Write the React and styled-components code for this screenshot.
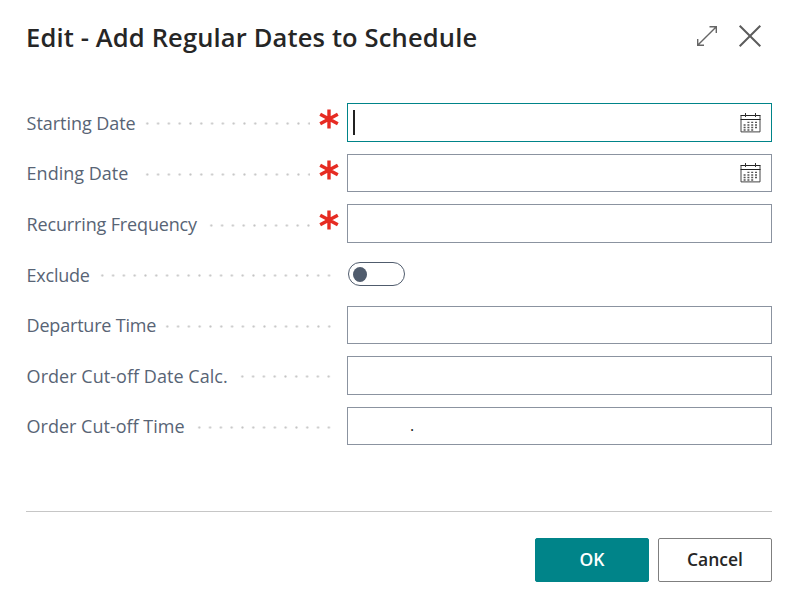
import React from 'react';
import styled, { createGlobalStyle } from 'styled-components';

const GlobalStyle = createGlobalStyle`
	* {
		box-sizing: border-box;
	}
	body {
		margin: 0;
		background: #fff;
		font-family: 'Open Sans', 'Noto Sans', sans-serif;
	}
`;
const Dialog = styled.div`
	display: flex;
	flex-direction: column;
	width: 802px;
	height: 607px;
	padding: 0 30px 0 26px;
	overflow: hidden;
	background: #fff;
`;
const Header = styled.header`
	display: flex;
	align-items: center;
	height: 72px;
	padding-right: 10px;
`;
const Title = styled.h1`
	flex: 1;
	margin: 1px 0 0;
	color: #262626;
	font-size: 25.5px;
	font-weight: 600;
	letter-spacing: 0.15px;
	line-height: 36px;
	white-space: nowrap;
`;
const IconButton = styled.button`
	display: flex;
	margin: 0 0 0 ${props => props.$gap || 0}px;
	padding: 0;
	border: 0;
	background: none;
	svg {
		display: block;
	}
`;
const Form = styled.form`
	display: flex;
	flex-direction: column;
	gap: 12.23px;
	margin: 31.2px 0 0;
`;
const Row = styled.div`
	display: flex;
	height: 38.4px;
`;
const Caption = styled.div`
	display: flex;
	align-items: center;
	justify-content: space-between;
	width: 321px;
	padding-right: ${props => (props.$required ? 8 : 16.5)}px;
`;
const Label = styled.label`
	padding: 0.6px 0 0 0.6px;
	color: #586475;
	font-size: 18px;
	font-weight: 400;
	letter-spacing: ${props => props.$tracking || 0}px;
	line-height: 26px;
	white-space: nowrap;
`;
const Leader = styled.div`
	display: flex;
	align-items: center;
`;
const Dots = styled.span`
	width: ${props => props.$count * 10.8}px;
	height: 3px;
	margin: 3px ${props => (props.$required ? 8.6 : 0)}px 0 0;
	background: radial-gradient(circle at 9.3px 1.5px, #c4c4c4 0.6px, transparent 1.6px) 0 0 / 10.8px 3px;
`;
const Star = styled.svg`
	display: block;
	margin-bottom: 6.4px;
`;
const Field = styled.div`
	display: flex;
	flex: 1;
	align-items: center;
	padding: 0 10px 0 5px;
	border: 1px solid ${props => (props.$focused ? '#008489' : '#8b93a0')};
	background: #fff;
`;
const Caret = styled.span`
	width: 2px;
	height: 25px;
	background: #212121;
`;
const Value = styled.span`
	padding: 0 0 2px 57px;
	color: #212121;
	font-size: 16px;
	line-height: 26px;
`;
const Calendar = styled.svg`
	display: block;
	margin: 1px 0 0 auto;
`;
const Switch = styled.span`
	display: flex;
	align-items: center;
	width: 57px;
	height: 24px;
	margin: 7px 0 0 1px;
	padding-left: 4px;
	border: 1px solid #505c6d;
	border-radius: 12px;
`;
const Knob = styled.span`
	width: 14px;
	height: 15px;
	border-radius: 50%;
	background: #505c6d;
`;
const Footer = styled.footer`
	display: flex;
	justify-content: flex-end;
	gap: 9px;
	margin-top: auto;
	height: 96px;
	padding-top: 26px;
	border-top: 1px solid #c6c6c6;
`;
const Button = styled.button`
	width: 114px;
	height: 44px;
	padding: 0 0 3px;
	border: 1px solid ${props => (props.$primary ? '#008489' : '#7f7f7f')};
	border-radius: 2px;
	background: ${props => (props.$primary ? '#008489' : '#fff')};
	color: ${props => (props.$primary ? '#fff' : '#262626')};
	font-family: inherit;
	font-size: 17.5px;
	font-weight: 600;
`;

const fields = [
    { label: 'Starting Date', dots: 16, required: true, focused: true, date: true, tracking: -0.05 },
    { label: 'Ending Date', dots: 16, required: true, date: true },
    { label: 'Recurring Frequency', dots: 10, required: true, tracking: -0.15 },
    { label: 'Exclude', dots: 22, toggle: true, tracking: -0.25 },
    { label: 'Departure Time', dots: 16, tracking: -0.2 },
    { label: 'Order Cut-off Date Calc.', dots: 9, tracking: 0.04 },
    { label: 'Order Cut-off Time', dots: 13, value: '.' },
];

const RequiredMark = () => (
    <Star width="20" height="20" viewBox="0 0 20 20" stroke="#e62b22" strokeWidth="3.4">
        <path d="M10 0.4v19.2M1.2 5.2l17.6 9.6M18.8 5.2l-17.6 9.6"/>
    </Star>
);

const CalendarIcon = () => (
    <Calendar width="21" height="20" viewBox="0 0 21 20" fill="none">
        <path d="M1 2.5h19v16.4H1z" stroke="#444"/>
        <path d="M0.5 2.5h20M0.5 6.5h20" stroke="#222"/>
        <path d="M5.5 0v4M15.5 0v4" stroke="#333"/>
        <path d="M7.4 9.4h10M3.6 12h13.5M3.6 14.5h13.5M3.6 17h10" stroke="#555" strokeWidth="1.4" strokeDasharray="2 1.8"/>
    </Calendar>
);

export default () => {
    return <React.Fragment>
        <GlobalStyle/>
        <Dialog>
            <Header>
                <Title>Edit - Add Regular Dates to Schedule</Title>
                <IconButton aria-label="Expand">
                    <svg width="22" height="22" viewBox="0 0 22 22" fill="none" stroke="#666" strokeWidth="1.4">
                        <path d="M1.7 20.3L20.3 1.7M13.5 1.7h6.8v6.2M1.7 14v6.3h6.3"/>
                    </svg>
                </IconButton>
                <IconButton aria-label="Close" $gap={20}>
                    <svg width="24" height="24" viewBox="0 0 24 24" fill="none" stroke="#5c5c5c" strokeWidth="2">
                        <path d="M1.7 1.7l20.6 20.6M22.3 1.7L1.7 22.3"/>
                    </svg>
                </IconButton>
            </Header>
            <Form>
                {fields.map(field => (
                    <Row key={field.label}>
                        <Caption $required={field.required}>
                            <Label $tracking={field.tracking}>{field.label}</Label>
                            <Leader>
                                <Dots $count={field.dots} $required={field.required}/>
                                {field.required && <RequiredMark/>}
                            </Leader>
                        </Caption>
                        {field.toggle
                            ? <Switch role="switch"><Knob/></Switch>
                            : <Field $focused={field.focused}>
                                {field.focused && <Caret/>}
                                {field.value && <Value>{field.value}</Value>}
                                {field.date && <CalendarIcon/>}
                            </Field>}
                    </Row>
                ))}
            </Form>
            <Footer>
                <Button $primary>OK</Button>
                <Button>Cancel</Button>
            </Footer>
        </Dialog>
    </React.Fragment>;
}
